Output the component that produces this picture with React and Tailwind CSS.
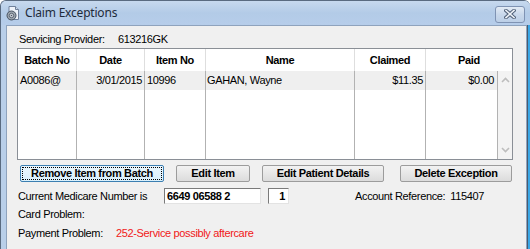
import React from 'react';

const font = { fontFamily: '"Liberation Sans", Arial, sans-serif' };

function TitleIcon() {
  return (
    <svg width="16" height="16" viewBox="0 0 16 16">
      <path d="M4 1.5h6.5l3 3v10h-9.5z" fill="#eef3fa" stroke="#6f819c" />
      <path d="M10.5 1.5v3h3" fill="#cfdbeb" stroke="#6f819c" />
      <circle cx="6.5" cy="10.5" r="4.5" fill="#9aa3ad" stroke="#4a5563" />
      <circle cx="6.5" cy="10.5" r="2.2" fill="#d6dbe1" stroke="#5b6572" />
      <circle cx="6.5" cy="10.5" r="0.8" fill="#4a5563" />
    </svg>
  );
}

function CloseButton() {
  return (
    <div className="w-[30px] h-[17px] rounded-[3px] border border-[#7f93b3] bg-gradient-to-b from-[#e3ebf5] via-[#c9d8eb] to-[#bccfe7] flex items-center justify-center">
      <svg width="12" height="10" viewBox="0 0 12 10">
        <path d="M2 1.5l8 7M10 1.5l-8 7" stroke="#55657c" strokeWidth="3.6" strokeLinecap="square" />
        <path d="M2 1.5l8 7M10 1.5l-8 7" stroke="#eef2f7" strokeWidth="1.6" strokeLinecap="square" />
      </svg>
    </div>
  );
}

function Btn({ children, w, focused }) {
  if (focused) {
    return (
      <div className={`${w} h-[17px] rounded-[2px] border border-[#3c7fb1] bg-gradient-to-b from-[#eaf6fd] to-[#d9f0fc] p-[1px] flex`}>
        <div className="flex-1 border border-dotted border-black flex items-center justify-center font-bold text-black">
          {children}
        </div>
      </div>
    );
  }
  return (
    <div className={`${w} h-[17px] rounded-[2px] border border-[#9c9c9c] bg-gradient-to-b from-[#f2f2f2] to-[#dcdcdc] flex items-center justify-center font-bold text-black`}>
      {children}
    </div>
  );
}

const cols = ['w-[59px]', 'w-[68px]', 'w-[61px]', 'w-[149px]', 'w-[71px]', 'w-[72px]'];

export default function App() {
  const headers = ['Batch No', 'Date', 'Item No', 'Name', 'Claimed', 'Paid'];
  const row = [
    { t: 'A0086@', a: 'text-left pl-[2px]' },
    { t: '3/01/2015', a: 'text-right pr-[2px]' },
    { t: '10996', a: 'text-left pl-[2px]' },
    { t: 'GAHAN, Wayne', a: 'text-left pl-[1px]' },
    { t: '$11.35', a: 'text-right pr-[2px]' },
    { t: '$0.00', a: 'text-right pr-[3px]' },
  ];

  return (
    <div
      className="w-[530px] h-[249px] overflow-hidden flex flex-col bg-[#b9cfe9] border-l border-t border-[#5a6b80] rounded-tl-[6px] rounded-tr-[6px] text-[11px] tracking-[-0.35px] text-black"
      style={font}
    >
      {/* Title bar */}
      <div className="h-[24px] shrink-0 flex items-center pl-[4px] pr-[5px] bg-gradient-to-b from-[#c7d9ee] via-[#b3cbe7] to-[#b6cdea]">
        <TitleIcon />
        <span className="ml-[4px] text-[12px] tracking-[-0.2px] text-[#1e2a3a]" style={{ fontFamily: '"Noto Sans", sans-serif' }}>
          Claim Exceptions
        </span>
        <div className="ml-auto mt-[2px]">
          <CloseButton />
        </div>
      </div>

      {/* Frame + body */}
      <div className="flex-1 flex pl-[5px]">
        <div className="flex-1 bg-[#f0f0f0] border-t border-l border-r border-[#8fa3bd] flex flex-col">
          {/* Servicing provider */}
          <div className="mt-[6px] h-[14px] flex items-center pl-[12px]">
            <span className="w-[99px]">Servicing Provider:</span>
            <span>613216GK</span>
          </div>

          {/* Table */}
          <div className="mt-[2px] ml-[10px] w-[496px] h-[112px] border border-[#8a8f96] bg-white flex flex-col">
            <div className="h-[22px] flex font-bold">
              {headers.map((h, i) => (
                <div
                  key={h}
                  className={`${i === 5 ? 'flex-1' : cols[i] + ' border-r border-[#dedede]'} flex items-center justify-center`}
                >
                  {h}
                </div>
              ))}
            </div>
            <div className="flex-1 flex">
              <div className="flex">
                {row.map((c, i) => (
                  <div key={i} className={`${cols[i]} border-r border-[#b2b2b2] flex flex-col`}>
                    <div className={`h-[19px] bg-[#efefef] leading-[19px] ${c.a}`}>{c.t}</div>
                  </div>
                ))}
              </div>
              <div className="flex-1 bg-[#f3f3f3] flex flex-col items-center justify-between py-[6px]">
                <svg width="9" height="6" viewBox="0 0 9 6">
                  <path d="M1 5l3.5-3.5L8 5" fill="none" stroke="#bdbdbd" strokeWidth="1.6" />
                </svg>
                <svg width="9" height="6" viewBox="0 0 9 6">
                  <path d="M1 1l3.5 3.5L8 1" fill="none" stroke="#bdbdbd" strokeWidth="1.6" />
                </svg>
              </div>
            </div>
          </div>

          {/* Buttons */}
          <div className="mt-[5px] ml-[13px] flex">
            <Btn w="w-[144px]" focused>Remove Item from Batch</Btn>
            <div className="ml-[12px]"><Btn w="w-[74px]">Edit Item</Btn></div>
            <div className="ml-[12px]"><Btn w="w-[122px]">Edit Patient Details</Btn></div>
            <div className="ml-[16px]"><Btn w="w-[112px]">Delete Exception</Btn></div>
          </div>

          {/* Medicare number */}
          <div className="mt-[6px] ml-[11px] h-[16px] flex items-center">
            <span className="w-[146px]">Current Medicare Number is</span>
            <div className="w-[97px] h-[16px] bg-white border border-[#e3e3e3] border-t-[#7a7a7a] border-l-[#7a7a7a] font-bold pl-[2px] leading-[14px]">
              6649 06588 2
            </div>
            <div className="ml-[7px] w-[21px] h-[16px] bg-white border border-[#e3e3e3] border-t-[#7a7a7a] border-l-[#7a7a7a] font-bold pr-[3px] text-right leading-[14px]">
              1
            </div>
            <span className="ml-[66px]">Account Reference:</span>
            <span className="ml-[5px]">115407</span>
          </div>

          <div className="mt-[3px] ml-[11px] h-[14px] flex items-center">
            <span>Card Problem:</span>
          </div>

          <div className="mt-[5px] ml-[11px] h-[14px] flex items-center">
            <span className="w-[98px]">Payment Problem:</span>
            <span className="text-[#f01818]">252-Service possibly aftercare</span>
          </div>
        </div>
        <div className="w-[3px] bg-[#3aa7e6] border-l border-[#4a5a6e]" />
      </div>
    </div>
  );
}
